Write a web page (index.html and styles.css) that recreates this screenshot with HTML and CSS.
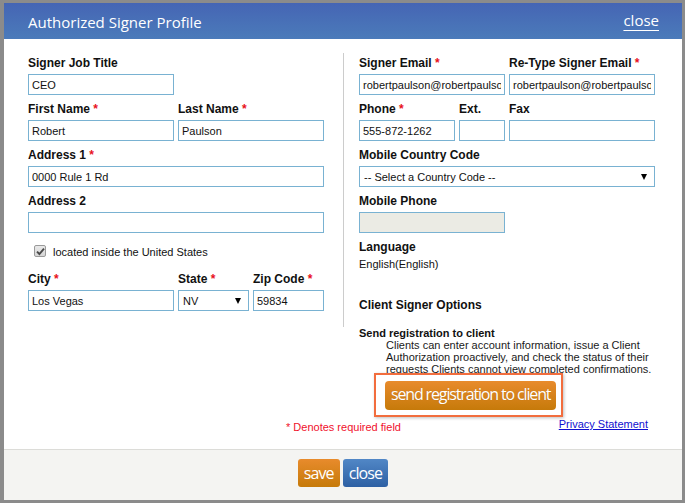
FILE: index.html
```html
<html>
<head>
  <title>Authorized Signer Profile</title>
  <link rel="stylesheet" href="styles.css">
</head>
<body>
  <div class="dialog">
    <div class="dialog-head">
      <div class="dialog-title">Authorized Signer Profile</div>
      <a class="head-close" href="#">close</a>
    </div>

    <div class="dialog-body">
      <div class="cols">
        <div class="col-left">
          <div class="row">
            <div class="field w146">
              <label>Signer Job Title</label>
              <input class="inp" type="text" value="CEO">
            </div>
          </div>
          <div class="row">
            <div class="field w146">
              <label>First Name <span class="req">*</span></label>
              <input class="inp" type="text" value="Robert">
            </div>
            <div class="field w146">
              <label>Last Name <span class="req">*</span></label>
              <input class="inp" type="text" value="Paulson">
            </div>
          </div>
          <div class="row">
            <div class="field w296">
              <label>Address 1 <span class="req">*</span></label>
              <input class="inp" type="text" value="0000 Rule 1 Rd">
            </div>
          </div>
          <div class="row">
            <div class="field w296">
              <label>Address 2</label>
              <input class="inp" type="text" value="">
            </div>
          </div>
          <div class="check-row">
            <span class="check">
              <svg width="9" height="9" viewBox="0 0 9 9"><path d="M1 4.6 L3.4 7 L8 1.6" fill="none" stroke="#4a4a4a" stroke-width="1.9"/></svg>
            </span>
            <span class="check-label">located inside the United States</span>
          </div>
          <div class="row">
            <div class="field w146">
              <label>City <span class="req">*</span></label>
              <input class="inp" type="text" value="Los Vegas">
            </div>
            <div class="field w71">
              <label>State <span class="req">*</span></label>
              <div class="sel-wrap">
                <select class="sel"><option>NV</option></select>
                <span class="caret"></span>
              </div>
            </div>
            <div class="field w71">
              <label>Zip Code <span class="req">*</span></label>
              <input class="inp" type="text" value="59834">
            </div>
          </div>
        </div>

        <div class="col-right">
          <div class="opts">
            <div class="row">
              <div class="field w146">
                <label>Signer Email <span class="req">*</span></label>
                <input class="inp" type="text" value="robertpaulson@robertpaulson.com">
              </div>
              <div class="field w146">
                <label>Re-Type Signer Email <span class="req">*</span></label>
                <input class="inp" type="text" value="robertpaulson@robertpaulson.com">
              </div>
            </div>
            <div class="row">
              <div class="field w96">
                <label>Phone <span class="req">*</span></label>
                <input class="inp" type="text" value="555-872-1262">
              </div>
              <div class="field w46">
                <label>Ext.</label>
                <input class="inp" type="text" value="">
              </div>
              <div class="field w146">
                <label>Fax</label>
                <input class="inp" type="text" value="">
              </div>
            </div>
            <div class="row">
              <div class="field w296">
                <label>Mobile Country Code</label>
                <div class="sel-wrap">
                  <select class="sel"><option>-- Select a Country Code --</option></select>
                  <span class="caret"></span>
                </div>
              </div>
            </div>
            <div class="row">
              <div class="field w146">
                <label>Mobile Phone</label>
                <input class="inp inp-off" type="text" value="" disabled>
              </div>
            </div>
            <div class="field">
              <label>Language</label>
              <div class="lang">English(English)</div>
            </div>
            <div class="opts-title">Client Signer Options</div>
          </div>

          <div class="send">
            <div class="send-title">Send registration to client</div>
            <div class="send-desc">Clients can enter account information, issue a Client Authorization proactively, and check the status of their requests Clients cannot view completed confirmations.</div>
            <div class="callout">
              <button class="btn btn-orange btn-send">send registration to client</button>
            </div>
          </div>
        </div>
      </div>

      <div class="form-foot">
        <span class="req-note">* Denotes required field</span>
        <a class="privacy" href="#">Privacy Statement</a>
      </div>
    </div>

    <div class="dialog-foot">
      <button class="btn btn-orange">save</button>
      <button class="btn btn-blue">close</button>
    </div>
  </div>
</body>
</html>
```

FILE: styles.css
```css
body {
  margin: 0;
  padding: 3px 3px 3px 4px;
  background-color: #8b8b8b;
  font-family: "Liberation Sans", Arial, sans-serif;
  color: #111;
}

.dialog {
  width: 678px;
  height: 497px;
  background-color: #ffffff;
  display: flex;
  flex-direction: column;
}

/* header */
.dialog-head {
  height: 36px;
  box-sizing: border-box;
  padding: 9px 23px 0 24px;
  display: flex;
  justify-content: space-between;
  align-items: flex-start;
  background: linear-gradient(#4565b4, #4b7bba);
  font-family: "Open Sans", sans-serif;
  color: #ffffff;
}

.dialog-title {
  font-size: 15px;
  line-height: 20px;
}

.head-close {
  color: #ffffff;
  font-size: 15px;
  line-height: 20px;
  margin-top: -2px;
  text-decoration: underline;
  text-underline-offset: 4px;
  text-decoration-thickness: 1px;
}

/* body */
.dialog-body {
  height: 410px;
  box-sizing: border-box;
  padding: 14px 27px 0 24px;
}

.cols {
  display: flex;
}

.col-left {
  width: 296px;
  padding-top: 3px;
}

.col-right {
  width: 312px;
  margin-left: 19px;
}

.opts {
  border-left: 1px solid #cccccc;
  padding: 3px 0 15px 15px;
}

.row {
  display: flex;
  gap: 4px;
  margin-bottom: 7px;
}

.field {
  display: flex;
  flex-direction: column;
}

.field label {
  font-size: 12px;
  font-weight: bold;
  line-height: 14px;
  margin-bottom: 4px;
}

.req {
  color: #e8101c;
}

.w46 { width: 46px; }
.w71 { width: 71px; }
.w96 { width: 96px; }
.w146 { width: 146px; }
.w296 { width: 296px; }

.inp {
  box-sizing: border-box;
  height: 21px;
  width: 100%;
  margin: 0;
  padding: 0 3px;
  border: 1px solid #79b2d2;
  border-radius: 0;
  font-family: "Liberation Sans", Arial, sans-serif;
  font-size: 11px;
  color: #111;
  background-color: #ffffff;
  outline: none;
}

.inp-off {
  background-color: #ebebe4;
}

.sel-wrap {
  position: relative;
}

.sel {
  appearance: none;
  -webkit-appearance: none;
  box-sizing: border-box;
  height: 21px;
  width: 100%;
  margin: 0;
  padding: 0 0 0 4px;
  border: 1px solid #79b2d2;
  border-radius: 0;
  font-family: "Liberation Sans", Arial, sans-serif;
  font-size: 11px;
  color: #111;
  background-color: #ffffff;
}

.caret {
  position: absolute;
  right: 8px;
  top: 8px;
  width: 0;
  height: 0;
  border-left: 3px solid transparent;
  border-right: 3px solid transparent;
  border-top: 6px solid #000;
}

/* margin-top collapses with the row above, so 12px lands 12px below the input */
.check-row {
  display: flex;
  align-items: flex-start;
  margin: 12px 0 13px 6px;
}

.check {
  box-sizing: border-box;
  width: 12px;
  height: 12px;
  border: 1px solid #9a9a9a;
  border-radius: 2px;
  background: linear-gradient(#e9e9e9, #d6d6d6);
  display: flex;
  align-items: center;
  justify-content: center;
}

.check-label {
  font-size: 11px;
  line-height: 13px;
  margin: 1px 0 0 7px;
}

.lang {
  font-size: 11px;
  line-height: 13px;
}

.opts-title {
  font-size: 12px;
  font-weight: bold;
  line-height: 14px;
  margin-top: 27px;
}

/* send registration */
.send {
  padding-left: 16px;
}

.send-title {
  font-size: 11px;
  font-weight: bold;
  line-height: 12px;
}

.send-desc {
  width: 272px;
  margin-left: 27px;
  font-size: 11px;
  line-height: 12px;
  color: #1a1a1a;
}

.callout {
  position: relative;
  width: fit-content;
  margin: -2px 0 0 15px;
  padding: 6px 5px 5px 9px;
  border: 2px solid #f26d3d;
  background-color: #ffffff;
  box-shadow: 1px 1px 3px rgba(0, 0, 0, 0.25);
}

.btn {
  border: none;
  border-radius: 3px;
  color: #ffffff;
  font-family: "Open Sans", sans-serif;
  font-size: 16px;
  letter-spacing: -0.9px;
  height: 28px;
  line-height: 27px;
  padding: 0 6px;
  cursor: pointer;
}

.btn-orange {
  background: linear-gradient(#e88b2c, #c67a0a);
}

.btn-blue {
  background: linear-gradient(#5187c6, #2d60a4);
}

.btn-send {
  display: block;
  height: 29px;
  padding: 0 6px 2px 6px;
  border-radius: 4px;
  letter-spacing: -1.15px;
  text-shadow: 0 0 1px rgba(0, 0, 0, 0.15);
}

.form-foot {
  display: flex;
  align-items: flex-start;
  padding-left: 258px;
  margin-top: 1px;
  font-size: 11px;
  line-height: 13px;
}

.req-note {
  color: #f0102c;
  margin-top: 3px;
}

.privacy {
  margin-left: auto;
  margin-right: 7px;
  color: #1010d0;
  text-decoration: underline;
}

/* footer */
.dialog-foot {
  flex: 1;
  border-top: 1px solid #dcdcd8;
  background-color: #f4f4f2;
  display: flex;
  justify-content: center;
  align-items: flex-start;
  gap: 3px;
  padding-top: 9px;
}
```
